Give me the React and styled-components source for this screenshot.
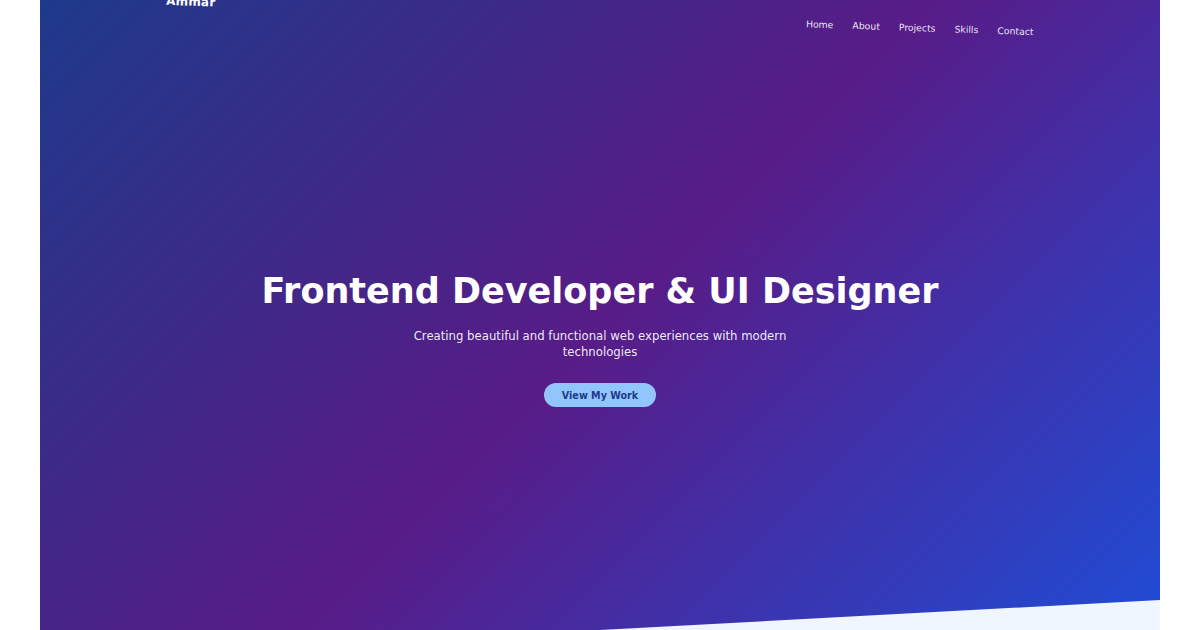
import React from 'react'
import styled, { createGlobalStyle } from 'styled-components'

const GlobalStyle = createGlobalStyle`
  * { box-sizing: border-box; }
  body {
    margin: 0;
    background: #ffffff;
    font-family: "DejaVu Sans", "Liberation Sans", sans-serif;
  }
`;

const Page = styled.div`
  width: 1120px;
  margin: 0 auto;
  background: #eff6ff;
  height: 630px;
  overflow: hidden;
`;

const Hero = styled.section`
  height: 660px;
  background: linear-gradient(135deg, #1e3a8a 0%, #581c87 50%, #1d4ed8 100%);
  clip-path: polygon(0 0, 100% 0, 100% 600px, 0 100%);
  display: flex;
  flex-direction: column;
  color: #ffffff;
`;

const Header = styled.header`
  width: 868px;
  margin: 0 auto;
  display: flex;
  justify-content: space-between;
  align-items: center;
  padding-top: 9px;
  transform: rotate(2deg);
`;

const Logo = styled.div`
  font-weight: 700;
  font-size: 12px;
  letter-spacing: 0.2px;
`;

const Nav = styled.nav`
  display: flex;
  gap: 19px;
`;

const NavLink = styled.a`
  color: rgba(255, 255, 255, 0.9);
  font-size: 9.3px;
  text-decoration: none;
`;

const Content = styled.div`
  flex: 1;
  display: flex;
  flex-direction: column;
  align-items: center;
  justify-content: center;
  text-align: center;
  padding-bottom: 6px;
`;

const Title = styled.h1`
  margin: 0 0 16px;
  font-size: 35px;
  font-weight: 700;
  line-height: 1.2;
`;

const Subtitle = styled.p`
  margin: 0 0 23px;
  max-width: 400px;
  font-size: 11.7px;
  line-height: 16px;
  color: rgba(255, 255, 255, 0.92);
`;

const Button = styled.button`
  border: none;
  background: #93c5fd;
  color: #1e3a8a;
  font-family: inherit;
  font-weight: 700;
  font-size: 9.6px;
  width: 112px;
  height: 24px;
  border-radius: 999px;
  cursor: pointer;
`;

const links = ['Home', 'About', 'Projects', 'Skills', 'Contact'];

const App = () => {
  return (
    <Page>
      <GlobalStyle />
      <Hero>
        <Header>
          <Logo>Ammar</Logo>
          <Nav>
            {links.map((l) => (
              <NavLink key={l} href="#">{l}</NavLink>
            ))}
          </Nav>
        </Header>
        <Content>
          <Title>Frontend Developer &amp; UI Designer</Title>
          <Subtitle>Creating beautiful and functional web experiences with modern technologies</Subtitle>
          <Button>View My Work</Button>
        </Content>
      </Hero>
    </Page>
  )
}

export default App
